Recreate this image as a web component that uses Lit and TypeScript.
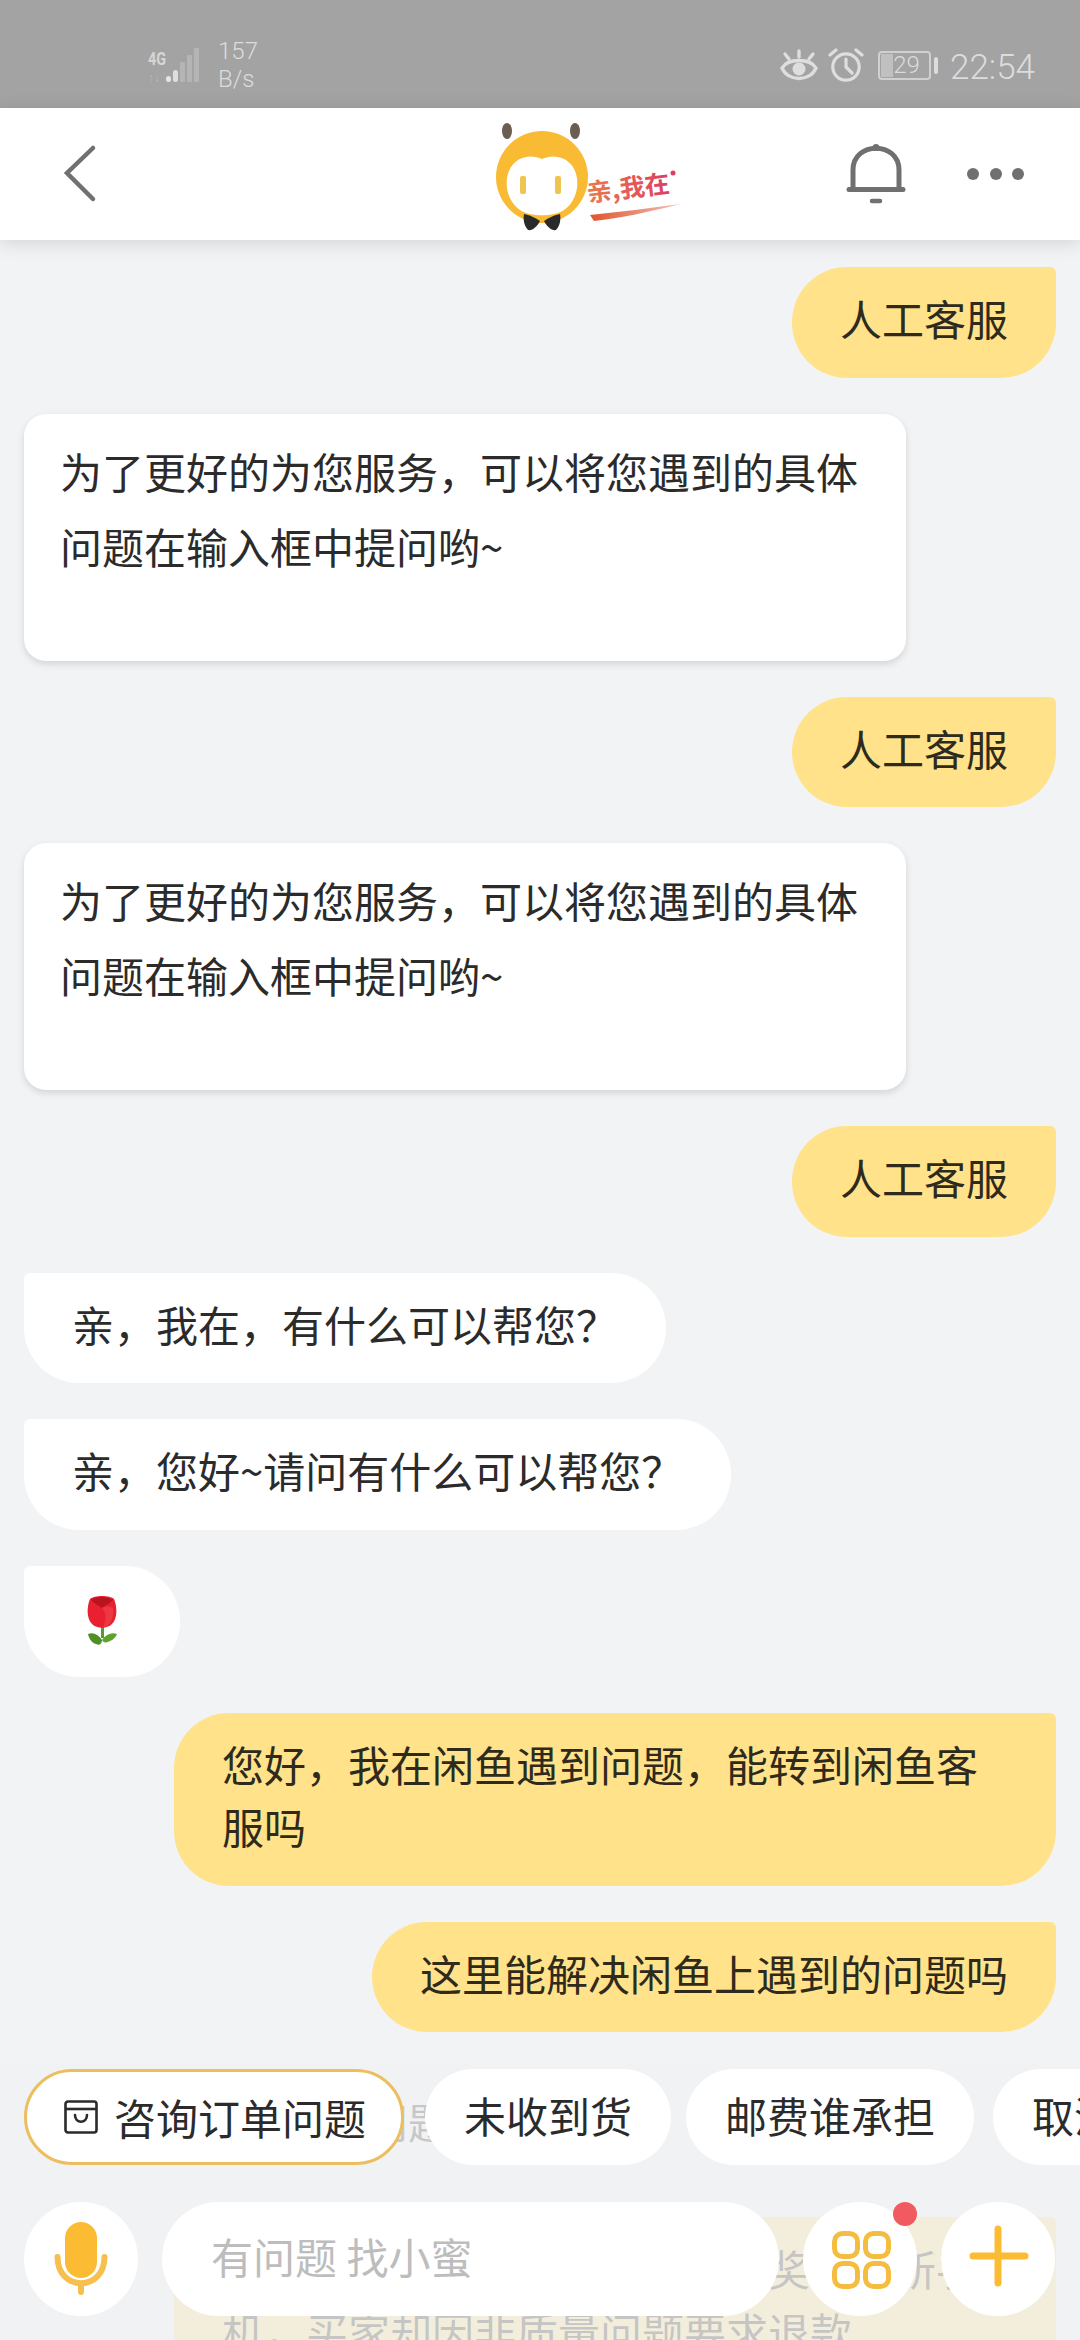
import { LitElement, html, css, svg } from "lit";
import { customElement } from "lit/decorators.js";

const CJK = `"Noto Sans CJK SC", "Noto Sans", sans-serif`;

@customElement("app-root")
export class AppRoot extends LitElement {
  static styles = css`
    :host {
      display: block;
      position: relative;
      width: 1080px;
      height: 2340px;
      overflow: hidden;
      background: #f2f3f5;
      font-family: "Noto Sans CJK SC", "Noto Sans", sans-serif;
      color: #2b2b2b;
    }
    svg { display: block; flex: none; }
    .status {
      height: 108px;
      background: #a3a3a3;
      display: flex;
      align-items: center;
      color: #dcdcdc;
      font-family: Roboto, sans-serif;
      box-sizing: border-box;
      padding: 22px 0 0 146px;
    }
    .speed {
      margin-left: 18px;
      font-size: 24px;
      line-height: 28px;
      font-weight: 300;
    }
    .status-right {
      margin-left: auto;
      margin-right: 45px;
      display: flex;
      align-items: center;
    }
    .eye { margin-right: 10px; }
    .alarm { margin-right: 14px; }
    .battery {
      width: 53px;
      height: 29px;
      box-sizing: border-box;
      border: 2px solid #d0d0d0;
      border-radius: 4px;
      position: relative;
      display: flex;
      align-items: center;
      justify-content: center;
      font-size: 24px;
      font-weight: 300;
      line-height: 1;
    }
    .battery-fill {
      position: absolute;
      left: 1px; top: 1px; bottom: 1px;
      width: 12px;
      background: #c0c0c0;
    }
    .battery-num { position: relative; left: 2px; }
    .battery-tip {
      width: 4px;
      height: 17px;
      margin: 0 12px 0 3px;
      background: #dcdcdc;
      border-radius: 2px;
    }
    .time {
      font-size: 35px;
      font-weight: 300;
      line-height: 1;
      position: relative;
      top: 2px;
    }
    .nav {
      height: 132px;
      background: #fff;
      display: flex;
      align-items: center;
      padding-left: 60px;
      position: relative;
      box-shadow: 0 3px 18px rgba(0, 0, 0, 0.13);
    }
    .logo { margin-left: 390px; }
    .bell { margin-left: 150px; }
    .dots { margin-left: 50px; }
    .list {
      display: flex;
      flex-direction: column;
      gap: 36px;
      padding: 27px 24px 0;
    }
    .bubble {
      font-size: 42px;
      line-height: 62.5px;
      padding: 20px 48px 28px;
      border-radius: 55px;
      box-sizing: border-box;
      max-width: 882px;
      width: fit-content;
    }
    .me {
      align-self: flex-end;
      background: #ffe28a;
      color: #2e2a1c;
      border-top-right-radius: 6px;
    }
    .bot {
      background: #fff;
      border-top-left-radius: 6px;
    }
    .rose-b {
      width: 156px;
      height: 111px;
      display: flex;
      align-items: center;
      justify-content: center;
      padding: 0;
    }
    .card {
      background: #fff;
      width: 882px;
      max-width: 882px;
      font-size: 42px;
      line-height: 75px;
      padding: 19px 36px 78px;
      box-sizing: border-box;
      border-radius: 22px;
      box-shadow: 0 3px 7px rgba(0, 0, 0, 0.13);
    }
    .notice {
      font-size: 42px;
      line-height: 62px;
      padding: 22px 0 29px 6px;
      color: #333;
    }
    .footer {
      position: absolute;
      left: 0; right: 0; bottom: 0;
      height: 282px;
      background: rgba(240, 241, 243, 0.78);
      display: flex;
      flex-direction: column;
    }
    .chips {
      display: flex;
      overflow: hidden;
      margin-top: 11px;
      padding-left: 24px;
      gap: 15px;
    }
    .chip {
      flex: none;
      height: 96px;
      box-sizing: border-box;
      background: #fff;
      border-radius: 48px;
      font-size: 42px;
      line-height: 92px;
      padding: 0 39px;
      white-space: nowrap;
      color: #2b2b2b;
    }
    .chip-main {
      display: flex;
      align-items: center;
      gap: 16px;
      border: 3px solid #edbe5e;
      padding: 0 35px 0 37px;
      line-height: 86px;
      margin-right: 6px;
    }
    .chip-last { margin-left: 4px; }
    .inputs {
      display: flex;
      align-items: center;
      margin-top: 37px;
      padding: 0 24px;
      gap: 24px;
    }
    .circle {
      flex: none;
      width: 114px;
      height: 114px;
      border-radius: 50%;
      background: #fff;
      display: flex;
      align-items: center;
      justify-content: center;
      position: relative;
    }
    .input {
      width: 617px;
      height: 114px;
      background: #fff;
      border-radius: 57px;
      font-size: 42px;
      line-height: 108px;
      color: #bdbdbd;
      padding-left: 49px;
      box-sizing: border-box;
    }
    .dot {
      position: absolute;
      right: 0;
      top: 0;
      width: 24px;
      height: 24px;
      border-radius: 50%;
      background: #f25a62;
    }
  `;

  private signal() {
    return html`<svg width="54" height="40" viewBox="0 0 54 40">
      <text x="2" y="20" font-family="Roboto, sans-serif" font-weight="700" font-size="19" fill="#d6d6d6" textLength="18" lengthAdjust="spacingAndGlyphs">4G</text>
      <text x="2" y="37" font-family="Roboto, sans-serif" font-weight="500" font-size="12" fill="#b6b6b6">↑↓</text>
      <rect x="20" y="31" width="5" height="6" rx="2.5" fill="#e4e4e4"/>
      <rect x="27" y="25" width="5" height="12" rx="2.5" fill="#dedede"/>
      <rect x="34" y="17" width="5" height="20" rx="1" fill="#b5b5b5"/>
      <rect x="41" y="10" width="5" height="27" rx="1" fill="#b5b5b5"/>
      <rect x="48" y="3" width="5" height="34" rx="1" fill="#b5b5b5"/>
    </svg>`;
  }

  private eye() {
    return html`<svg class="eye" width="38" height="32" viewBox="0 0 38 32" fill="none" stroke="#dedede" stroke-width="3.4" stroke-linecap="round">
      <path d="M2 19 C8 9 30 9 36 19 C30 33 8 33 2 19 Z"/>
      <circle cx="19" cy="20" r="6.5" fill="#dedede" stroke="none"/>
      <path d="M19 2 V8 M5 5 L9 10 M33 5 L29 10"/>
    </svg>`;
  }

  private alarm() {
    return html`<svg class="alarm" width="36" height="34" viewBox="0 0 36 34" fill="none" stroke="#dedede" stroke-width="3.2" stroke-linecap="round">
      <circle cx="18" cy="19" r="13.2"/>
      <path d="M18 11 V19 L24 25 M2 7 L8 2 M34 7 L28 2"/>
    </svg>`;
  }

  private logo() {
    return svg`<svg class="logo" width="200" height="120" viewBox="0 0 200 120">
      <defs>
        <linearGradient id="txt" x1="0" x2="1" y1="0" y2="0">
          <stop offset="0" stop-color="#ea7a4a"/>
          <stop offset="1" stop-color="#dd3f62"/>
        </linearGradient>
        <linearGradient id="sw" x1="0" x2="1" y1="0" y2="0">
          <stop offset="0" stop-color="#e0552e"/>
          <stop offset="1" stop-color="#f3c0b4"/>
        </linearGradient>
      </defs>
      <ellipse cx="17" cy="17" rx="5" ry="8" fill="#6b5d50"/>
      <ellipse cx="85" cy="17" rx="5" ry="8" fill="#6b5d50"/>
      <circle cx="52" cy="63" r="46" fill="#f9bb33"/>
      <path d="M52 45 C42 40 28 42 21 53 C13 66 16 86 30 96 C40 103 64 103 74 96 C88 86 91 66 83 53 C76 42 62 40 52 45 Z" fill="#fff"/>
      <rect x="30" y="62" width="6" height="18" rx="2" fill="#efc550"/>
      <rect x="65" y="62" width="6" height="18" rx="2" fill="#efc550"/>
      <path d="M34 100 C39 101 46 104 50 107 C47 113 42 117 38 116 C34 112 33 105 34 100 Z" fill="#2a2a2a"/>
      <path d="M70 100 C65 101 58 104 54 107 C57 113 62 117 66 116 C70 112 71 105 70 100 Z" fill="#2a2a2a"/>
      <g transform="translate(98 88) rotate(-7)">
        <text x="0" y="0" font-family=${CJK} font-weight="700" font-size="25" fill="url(#txt)">亲,我在</text>
      </g>
      <circle cx="183" cy="59" r="2.5" fill="#dd3f62"/>
      <path d="M100 101 C130 98 160 94 190 90 C160 98 130 104 104 107 Z" fill="url(#sw)"/>
    </svg>`;
  }

  private rose() {
    return html`<svg width="34" height="54" viewBox="0 0 34 54">
      <path d="M16 32 H19 L19 44 H16 Z" fill="#5a9a2a"/>
      <path d="M3 40 C8 38 13 40 17 46 C17 50 14 52 11 50 C7 49 4 45 3 40 Z" fill="#4f8f25"/>
      <path d="M32 40 C27 38 21 40 17 46 C18 49 22 49 25 47 C28 46 31 43 32 40 Z" fill="#5fa32c"/>
      <path d="M5 5 C9 1 25 1 29 5 C32 12 33 24 27 30 C22 35 12 35 7 30 C1 24 2 12 5 5 Z" fill="#e8202f"/>
      <path d="M6 6 C11 2 23 2 28 6 C24 10 21 11 17 14 C13 11 10 10 6 6 Z" fill="#b9141f"/>
      <path d="M17 14 C21 18 22 26 18 33 C24 33 29 26 28 14 C24 12 21 12 17 14 Z" fill="#f0414a" opacity=".7"/>
    </svg>`;
  }

  render() {
    const ask = "人工客服";
    const card = html`为了更好的为您服务，可以将您遇到的具体<br />问题在输入框中提问哟~`;
    return html`
      <div class="status">
        ${this.signal()}
        <div class="speed">157<br />B/s</div>
        <div class="status-right">
          ${this.eye()} ${this.alarm()}
          <div class="battery">
            <div class="battery-fill"></div>
            <span class="battery-num">29</span>
          </div>
          <div class="battery-tip"></div>
          <div class="time">22:54</div>
        </div>
      </div>
      <div class="nav">
        <svg width="40" height="60" viewBox="0 0 40 60" fill="none" stroke="#707070" stroke-width="4.5" stroke-linecap="round">
          <path d="M33 4 L7 29 L33 55"/>
        </svg>
        ${this.logo()}
        <svg class="bell" width="70" height="64" viewBox="0 0 70 64" fill="none" stroke="#707070">
          <path d="M13 47 V28 C13 -1 59 -1 59 28 V47" stroke-width="5"/>
          <path d="M9 47.5 H63" stroke-width="5" stroke-linecap="round"/>
          <path d="M32 59 H40" stroke-width="4.5" stroke-linecap="round"/>
          <circle cx="36" cy="5.5" r="3.5" fill="#707070" stroke="none"/>
        </svg>
        <svg class="dots" width="70" height="16" viewBox="0 0 70 16" fill="#707070">
          <circle cx="13" cy="8" r="6"/><circle cx="36" cy="8" r="6"/><circle cx="58" cy="8" r="6"/>
        </svg>
      </div>
      <div class="list">
        <div class="bubble me">${ask}</div>
        <div class="card">${card}</div>
        <div class="bubble me">${ask}</div>
        <div class="card">${card}</div>
        <div class="bubble me">${ask}</div>
        <div class="bubble bot">亲，我在，有什么可以帮您？</div>
        <div class="bubble bot">亲，您好~请问有什么可以帮您？</div>
        <div class="bubble bot rose-b">${this.rose()}</div>
        <div class="bubble me">您好，我在闲鱼遇到问题，能转到闲鱼客服吗</div>
        <div class="bubble me">这里能解决闲鱼上遇到的问题吗</div>
        <div class="notice">您可能想咨询以下问题</div>
        <div class="bubble me">我在闲鱼卖了公司年会抽中的奖品全所手机，买家却因非质量问题要求退款</div>
      </div>
      <div class="footer">
        <div class="chips">
          <div class="chip chip-main">
            <svg width="34" height="34" viewBox="0 0 34 34" fill="none" stroke="#2b2b2b" stroke-width="2.6">
              <rect x="1.5" y="1.5" width="31" height="31" rx="2.5"/>
              <path d="M1.5 9 H32.5"/>
              <path d="M11 15 C11 24 23 24 23 15" stroke-linecap="round"/>
            </svg>
            咨询订单问题
          </div>
          <div class="chip">未收到货</div>
          <div class="chip">邮费谁承担</div>
          <div class="chip chip-last">取消订单</div>
        </div>
        <div class="inputs">
          <div class="circle">
            <svg width="114" height="114" viewBox="0 0 114 114">
              <rect x="41" y="20" width="32" height="56" rx="16" fill="#fbbc33"/>
              <path d="M33.5 55 C33.5 90 80.5 90 80.5 55" fill="none" stroke="#f7bf4e" stroke-width="6" stroke-linecap="round"/>
              <path d="M57 82 V90" stroke="#f7bf4e" stroke-width="6" stroke-linecap="round"/>
            </svg>
          </div>
          <div class="input">有问题 找小蜜</div>
          <div class="circle">
            <svg width="114" height="114" viewBox="0 0 114 114" fill="none" stroke="#f5bd3f" stroke-width="5">
              <rect x="31.5" y="31.5" width="23" height="23" rx="8"/>
              <rect x="62.5" y="31.5" width="23" height="23" rx="8"/>
              <rect x="31.5" y="61.5" width="23" height="23" rx="8"/>
              <rect x="62.5" y="61.5" width="23" height="23" rx="8"/>
            </svg>
            <div class="dot"></div>
          </div>
          <div class="circle">
            <svg width="114" height="114" viewBox="0 0 114 114" fill="none" stroke="#fbbc33" stroke-width="7" stroke-linecap="round">
              <path d="M57 27 V81 M32 54 H84"/>
            </svg>
          </div>
        </div>
      </div>
    `;
  }
}
